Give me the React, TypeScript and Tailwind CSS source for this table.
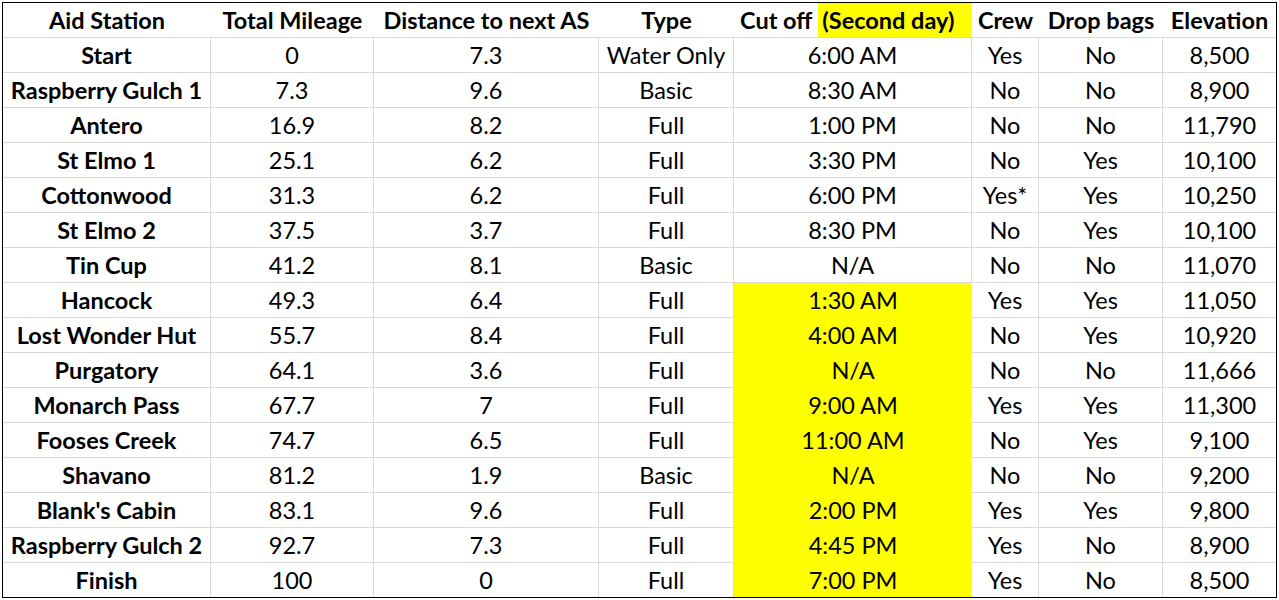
import React from "react";

type Row = {
  name: string;
  total: string;
  dist: string;
  type: string;
  cutoff: string;
  crew: string;
  drop: string;
  elev: string;
  secondDay?: boolean;
};

const rows: Row[] = [
  { name: "Start", total: "0", dist: "7.3", type: "Water Only", cutoff: "6:00 AM", crew: "Yes", drop: "No", elev: "8,500" },
  { name: "Raspberry Gulch 1", total: "7.3", dist: "9.6", type: "Basic", cutoff: "8:30 AM", crew: "No", drop: "No", elev: "8,900" },
  { name: "Antero", total: "16.9", dist: "8.2", type: "Full", cutoff: "1:00 PM", crew: "No", drop: "No", elev: "11,790" },
  { name: "St Elmo 1", total: "25.1", dist: "6.2", type: "Full", cutoff: "3:30 PM", crew: "No", drop: "Yes", elev: "10,100" },
  { name: "Cottonwood", total: "31.3", dist: "6.2", type: "Full", cutoff: "6:00 PM", crew: "Yes*", drop: "Yes", elev: "10,250" },
  { name: "St Elmo 2", total: "37.5", dist: "3.7", type: "Full", cutoff: "8:30 PM", crew: "No", drop: "Yes", elev: "10,100" },
  { name: "Tin Cup", total: "41.2", dist: "8.1", type: "Basic", cutoff: "N/A", crew: "No", drop: "No", elev: "11,070" },
  { name: "Hancock", total: "49.3", dist: "6.4", type: "Full", cutoff: "1:30 AM", crew: "Yes", drop: "Yes", elev: "11,050", secondDay: true },
  { name: "Lost Wonder Hut", total: "55.7", dist: "8.4", type: "Full", cutoff: "4:00 AM", crew: "No", drop: "Yes", elev: "10,920", secondDay: true },
  { name: "Purgatory", total: "64.1", dist: "3.6", type: "Full", cutoff: "N/A", crew: "No", drop: "No", elev: "11,666", secondDay: true },
  { name: "Monarch Pass", total: "67.7", dist: "7", type: "Full", cutoff: "9:00 AM", crew: "Yes", drop: "Yes", elev: "11,300", secondDay: true },
  { name: "Fooses Creek", total: "74.7", dist: "6.5", type: "Full", cutoff: "11:00 AM", crew: "No", drop: "Yes", elev: "9,100", secondDay: true },
  { name: "Shavano", total: "81.2", dist: "1.9", type: "Basic", cutoff: "N/A", crew: "No", drop: "No", elev: "9,200", secondDay: true },
  { name: "Blank's Cabin", total: "83.1", dist: "9.6", type: "Full", cutoff: "2:00 PM", crew: "Yes", drop: "Yes", elev: "9,800", secondDay: true },
  { name: "Raspberry Gulch 2", total: "92.7", dist: "7.3", type: "Full", cutoff: "4:45 PM", crew: "Yes", drop: "No", elev: "8,900", secondDay: true },
  { name: "Finish", total: "100", dist: "0", type: "Full", cutoff: "7:00 PM", crew: "Yes", drop: "No", elev: "8,500", secondDay: true },
];

const cols = "grid grid-cols-[208px_163px_225px_135px_238px_67px_124px_113px]";

export default function App() {
  return (
    <div className="min-h-screen bg-white pl-[2px] pt-[2px] text-black" style={{ fontFamily: "Lato, 'Open Sans', sans-serif" }}>
      <div className="w-[1275px] border border-black">
        {/* Header row - white fill, so no vertical gridlines */}
        <div className={`${cols} h-[35px] border-b border-[#d9d9d9] pt-[2px] text-[23.5px] font-bold leading-none`}>
          <div className="flex items-center justify-center">Aid Station</div>
          <div className="flex items-center justify-center">Total Mileage</div>
          <div className="flex items-center justify-center">Distance to next AS</div>
          <div className="flex items-center justify-center">Type</div>
          <div className="-mt-[2px] flex items-stretch pl-[6px]">
            <span className="flex items-center pt-[2px]">Cut off</span>
            <span className="ml-[6px] flex flex-1 items-center bg-[#ffff00] pl-[4px] pt-[2px]">(Second day)</span>
          </div>
          <div className="flex items-center justify-center">Crew</div>
          <div className="flex items-center justify-center">Drop bags</div>
          <div className="flex items-center justify-center">Elevation</div>
        </div>

        {rows.map((r, i) => {
          const last = i === rows.length - 1;
          const cell = `flex items-center justify-center pt-[2px] border-r border-[#d9d9d9] ${last ? "" : "border-b"}`;
          return (
            <div key={r.name} className={`${cols} ${last ? "h-[34px]" : "h-[35px]"} text-[23.5px] leading-none`}>
              <div className={`${cell} font-bold`}>{r.name}</div>
              <div className={cell}>{r.total}</div>
              <div className={cell}>{r.dist}</div>
              <div className={cell}>{r.type}</div>
              <div
                className={
                  r.secondDay
                    ? `flex items-center justify-center pt-[2px] bg-[#ffff00] ${last ? "" : "border-b border-[#ffff00]"}`
                    : cell
                }
              >
                {r.cutoff}
              </div>
              <div className={cell}>{r.crew}</div>
              <div className={cell}>{r.drop}</div>
              <div className={`flex items-center justify-center pt-[2px] border-[#d9d9d9] ${last ? "" : "border-b"}`}>{r.elev}</div>
            </div>
          );
        })}
      </div>
    </div>
  );
}
